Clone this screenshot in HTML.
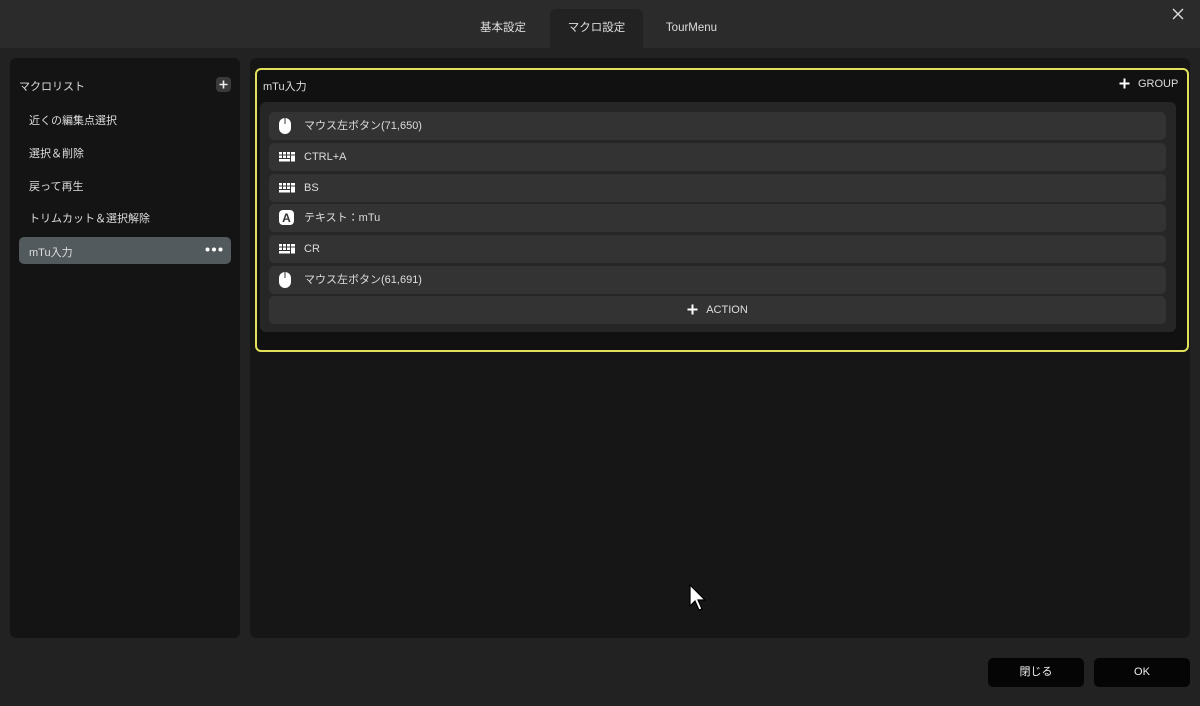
<!DOCTYPE html>
<html><head><meta charset="utf-8"><style>
*{box-sizing:border-box;margin:0;padding:0}
body{width:1200px;height:706px;background:#2b2b2b;font-family:"Liberation Sans","Noto Sans CJK JP",sans-serif;color:#ddd;font-size:11px;position:relative;overflow:hidden}
.abs{position:absolute}
.tab{position:absolute;top:9px;height:39px;line-height:39px;text-align:center;font-size:11.5px;color:#ddd}
.body{position:absolute;left:0;top:48px;width:1200px;height:658px;background:#222}
.lp{left:10px;top:58px;width:230px;height:580px;background:#141414;border-radius:6px}
.mp{left:250px;top:58px;width:940px;height:580px;background:#161616;border-radius:6px}
.li{position:absolute;left:29px;font-size:11px;color:#ddd}
.row{position:absolute;left:269px;width:897px;height:28px;background:#333;border-radius:5px;line-height:28px;padding-left:35px;color:#ddd}
.ic{position:absolute;left:10px;top:7px}
.btn{position:absolute;top:658px;width:96px;height:29px;background:#050505;border-radius:5px;text-align:center;line-height:29px;color:#eee}
.pl{display:inline-block;vertical-align:middle;margin-right:8px;margin-top:-2px}
</style></head><body>
<div class="tab" style="left:456px;width:94px">基本設定</div>
<div class="tab" style="left:550px;width:93px;background:#222;border-radius:6px 6px 0 0">マクロ設定</div>
<div class="tab" style="left:643px;width:97px">TourMenu</div>
<svg class="abs" style="left:1172px;top:8px" width="12" height="12"><path d="M1 1L11 11M11 1L1 11" stroke="#ddd" stroke-width="1.4"/></svg>
<div class="body"></div>
<div class="abs lp"></div>
<div class="abs mp"></div>
<div class="li" style="left:19px;top:78px">マクロリスト</div>
<div class="abs" style="left:216px;top:77px;width:15px;height:15px;border-radius:4px;background:#3a3a3a"><svg width="15" height="15"><path d="M7.5 3.5v8M3.5 7.5h8" stroke="#eee" stroke-width="1.6"/></svg></div>
<div class="li" style="top:112px">近くの編集点選択</div>
<div class="li" style="top:145px">選択＆削除</div>
<div class="li" style="top:178px">戻って再生</div>
<div class="li" style="top:210px">トリムカット＆選択解除</div>
<div class="abs" style="left:19px;top:237px;width:212px;height:27px;background:#535a5e;border-radius:5px"></div>
<div class="li" style="top:244px">mTu入力</div>
<svg class="abs" style="left:205px;top:247px" width="18" height="5"><circle cx="2.5" cy="2.5" r="2" fill="#fff"/><circle cx="9" cy="2.5" r="2" fill="#fff"/><circle cx="15.5" cy="2.5" r="2" fill="#fff"/></svg>
<div class="abs" style="left:255px;top:68px;width:934px;height:284px;border:2px solid #e2e25a;border-radius:6px;background:#111"></div>
<div class="abs" style="left:263px;top:78px">mTu入力</div>
<div class="abs" style="left:1119px;top:78px;color:#ddd"><svg class="pl" width="11" height="11"><path d="M5.5 0.5v10M0.5 5.5h10" stroke="#fff" stroke-width="2"/></svg>GROUP</div>
<div class="abs" style="left:260px;top:102px;width:916px;height:230px;background:#262626;border-radius:6px"></div>
<svg width="0" height="0"><defs>
<g id="mouse"><rect x="0" y="0" width="12" height="16" rx="6" fill="#fff"/><path d="M6 0v6" stroke="#333" stroke-width="1"/></g>
<g id="kb" fill="#fff"><rect x="0" y="0" width="3" height="2.5"/><rect x="4" y="0" width="3" height="2.5"/><rect x="8" y="0" width="3" height="2.5"/><rect x="12" y="0" width="4" height="2.5"/><rect x="0" y="3.5" width="3" height="2.5"/><rect x="4" y="3.5" width="3" height="2.5"/><rect x="8" y="3.5" width="3" height="2.5"/><rect x="12" y="3.5" width="4" height="6"/><rect x="0" y="7" width="11" height="2.5"/></g>
</defs></svg>
<div class="row" style="top:112px"><svg class="ic" style="top:6px" width="12" height="16"><use href="#mouse"/></svg>マウス左ボタン(71,650)</div>
<div class="row" style="top:143px"><svg class="ic" style="top:9px" width="16" height="10"><use href="#kb"/></svg>CTRL+A</div>
<div class="row" style="top:174px"><svg class="ic" style="top:9px" width="16" height="10"><use href="#kb"/></svg>BS</div>
<div class="row" style="top:204px"><svg class="ic" style="top:6px" width="16" height="16"><rect width="15" height="15" rx="4" fill="#fff"/><text x="7.5" y="12" text-anchor="middle" font-size="12" font-weight="bold" fill="#333" font-family="Liberation Sans">A</text></svg>テキスト：mTu</div>
<div class="row" style="top:235px"><svg class="ic" style="top:9px" width="16" height="10"><use href="#kb"/></svg>CR</div>
<div class="row" style="top:266px"><svg class="ic" style="top:6px" width="12" height="16"><use href="#mouse"/></svg>マウス左ボタン(61,691)</div>
<div class="row" style="top:296px;padding-left:0;text-align:center"><svg class="pl" width="11" height="11"><path d="M5.5 0.5v10M0.5 5.5h10" stroke="#fff" stroke-width="2"/></svg>ACTION</div>
<svg class="abs" style="left:689px;top:584px" width="20" height="30"><path d="M1 1L1 22L6 17L10 26L13 25L9 16L16 16Z" fill="#fff" stroke="#000" stroke-width="1.2"/></svg>
<div class="btn" style="left:988px">閉じる</div>
<div class="btn" style="left:1094px">OK</div>
</body></html>
